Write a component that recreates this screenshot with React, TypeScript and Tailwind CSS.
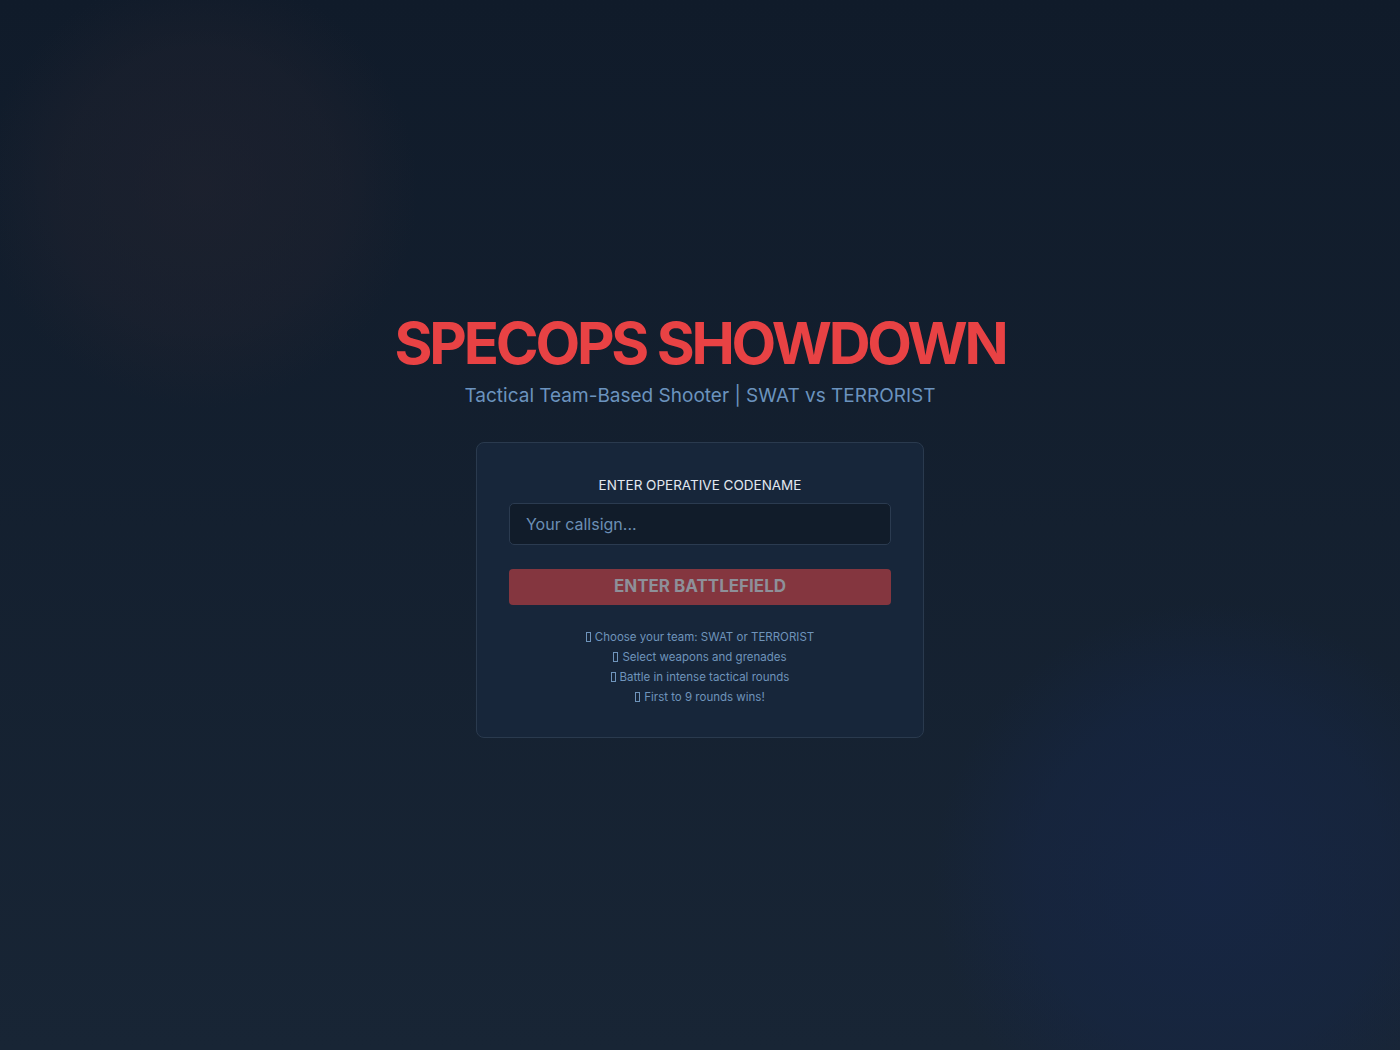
import React from "react";

function Tofu() {
  return (
    <span className="mr-[4px] inline-block h-[10px] w-[5px] border border-current align-[-1px]" />
  );
}

export default function App() {
  const items = [
    "Choose your team: SWAT or TERRORIST",
    "Select weapons and grenades",
    "Battle in intense tactical rounds",
    "First to 9 rounds wins!",
  ];
  return (
    <div
      className="relative min-h-screen w-full overflow-hidden flex items-center justify-center bg-gradient-to-b from-[#101b2a] to-[#182535]"
      style={{ fontFamily: "Inter, 'Noto Sans', sans-serif" }}
    >
      <div className="pointer-events-none absolute left-[-20px] top-[-30px] h-[440px] w-[440px] rounded-full bg-[radial-gradient(circle,rgba(34,35,47,0.6)_0%,rgba(34,35,47,0.4)_45%,rgba(34,35,47,0)_70%)]" />
      <div className="pointer-events-none absolute left-[930px] top-[600px] h-[560px] w-[560px] rounded-full bg-[radial-gradient(circle,rgba(22,38,70,0.8)_0%,rgba(22,38,70,0.5)_45%,rgba(22,38,70,0)_70%)]" />
      <div className="relative flex flex-col items-center">
        <h1 className="text-[58px] leading-[60px] font-bold tracking-[-0.055em] text-[#e84244]">
          SPECOPS SHOWDOWN
        </h1>
        <p className="mt-[9px] text-[19px] leading-[28px] text-[#6b93be]">
          Tactical Team-Based Shooter | SWAT vs TERRORIST
        </p>
        <div className="mt-8 w-[448px] rounded-lg border border-[#2a3a4e] bg-[#17263a] px-8 pt-8 pb-[30px]">
          <div className="text-center text-[13.5px] leading-[20px] text-[#e2e8f0]">
            ENTER OPERATIVE CODENAME
          </div>
          <input
            className="mt-[8px] block h-[42px] w-full rounded-[5px] border border-[#2b3b50] bg-[#111c2a] px-4 text-[16px] text-[#e2e8f0] placeholder:text-[#6b8fb5] outline-none"
            placeholder="Your callsign..."
          />
          <button
            disabled
            className="mt-6 block h-[36px] w-full rounded-[4px] bg-[#84363f] text-[17px] font-bold text-[#8e9099]"
          >
            ENTER BATTLEFIELD
          </button>
          <div className="mt-[22px] flex flex-col items-center text-[11.5px] leading-[20px] text-[#6f94bb]">
            {items.map((t) => (
              <div key={t}>
                <Tofu />
                {t}
              </div>
            ))}
          </div>
        </div>
      </div>
    </div>
  );
}
